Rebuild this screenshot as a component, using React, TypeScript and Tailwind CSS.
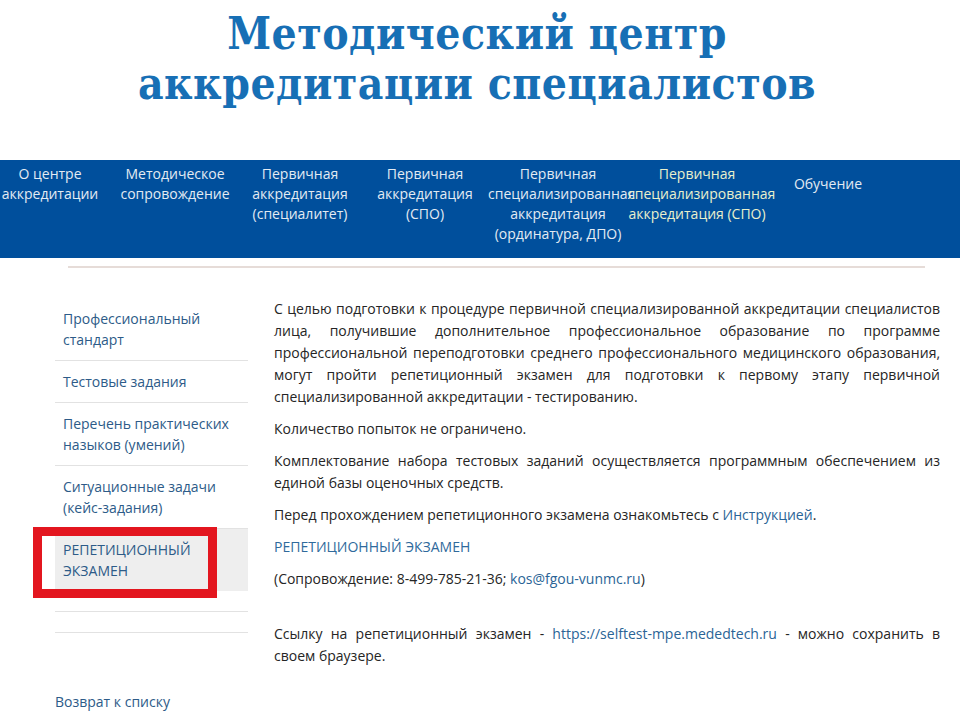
import React from "react";

const navItems: { lines: string[]; w: string; extra?: string; color?: string }[] = [
  { lines: ["О центре", "аккредитации"], w: "w-[100px]" },
  { lines: ["Методическое", "сопровождение"], w: "w-[150px]" },
  { lines: ["Первичная", "аккредитация", "(специалитет)"], w: "w-[100px]" },
  { lines: ["Первичная", "аккредитация", "(СПО)"], w: "w-[126px] ml-[12px]" },
  { lines: ["Первичная", "специализированная", "аккредитация", "(ординатура, ДПО)"], w: "w-[140px]" },
  { lines: ["Первичная", "специализированная", "аккредитация (СПО)"], w: "w-[138px]", color: "text-[#e9f0cc]" },
  { lines: ["Обучение"], w: "w-[124px]", extra: "pt-[14px]" },
];

const sideItems: string[][] = [
  ["Профессиональный", "стандарт"],
  ["Тестовые задания"],
  ["Перечень практических", "назыков (умений)"],
  ["Ситуационные задачи", "(кейс-задания)"],
];

export default function App() {
  return (
    <div className="w-[960px] h-[720px] bg-white overflow-hidden relative" style={{ fontFamily: '"Open Sans", "Noto Sans", sans-serif' }}>
      {/* Title */}
      <div className="h-[160px] pt-[9px] pr-[6px] text-center text-[#176fb5] font-bold tracking-[0.5px]" style={{ fontFamily: '"DejaVu Serif Condensed", "DejaVu Serif", serif', fontStretch: "condensed" }}>
        <div className="text-[44px] leading-[50px]">Методический центр</div>
        <div className="text-[44px] leading-[50px]">аккредитации специалистов</div>
      </div>

      {/* Nav */}
      <div className="h-[98px] bg-[#004f9c] flex text-[14px] leading-[20px] text-[#e3ebf3]">
        {navItems.map((it, i) => (
          <div key={i} className={`${it.w} ${it.extra ?? "pt-[4px]"} ${it.color ?? ""} text-center shrink-0`}>
            {it.lines.map((l, j) => (
              <div key={j} className="whitespace-nowrap">{l}</div>
            ))}
          </div>
        ))}
      </div>

      {/* Separator */}
      <div className="pt-[8px] pl-[68px] pr-[35px]">
        <div className="h-[2px] bg-[#e6dcd8]" />
      </div>

      <div className="flex pt-[30px]">
        {/* Sidebar */}
        <div className="w-[248px] pl-[55px] shrink-0 text-[14px] leading-[21px] text-[#2d5b88]">
          {sideItems.map((lines, i) => (
            <div key={i} className="px-[8px] py-[10px] border-b border-[#e2e2e2]">
              {lines.map((l, j) => (
                <div key={j}>{l}</div>
              ))}
            </div>
          ))}
          <div className="px-[8px] py-[10px] bg-[#eeeeee]">
            <div>РЕПЕТИЦИОННЫЙ</div>
            <div>ЭКЗАМЕН</div>
          </div>
          <div className="h-[21px] border-b border-[#e2e2e2]" />
          <div className="h-[21px] border-b border-[#e2e2e2]" />
          <div className="mt-[58px] -ml-[8px] px-[8px] text-[#2d5b88]">Возврат к списку</div>
        </div>

        {/* Content */}
        <div className="ml-[26px] w-[666px] text-[14px] leading-[22px] text-[#252525] text-justify">
          <p className="mb-[10px]">
            С целью подготовки к процедуре первичной специализированной аккредитации специалистов лица, получившие дополнительное профессиональное образование по программе профессиональной переподготовки среднего профессионального медицинского образования, могут пройти репетиционный экзамен для подготовки к первому этапу первичной специализированной аккредитации - тестированию.
          </p>
          <p className="mb-[10px]">Количество попыток не ограничено.</p>
          <p className="mb-[10px]">
            Комплектование набора тестовых заданий осуществляется программным обеспечением из единой базы оценочных средств.
          </p>
          <p className="mb-[10px]">
            Перед прохождением репетиционного экзамена ознакомьтесь с <span className="text-[#2a6496]">Инструкцией</span>.
          </p>
          <p className="mb-[10px] text-[#2f6a9c]">РЕПЕТИЦИОННЫЙ ЭКЗАМЕН</p>
          <p className="mb-[10px]">
            (Сопровождение: 8-499-785-21-36; <span className="text-[#2a6496]">kos@fgou-vunmc.ru</span>)
          </p>
          <div className="h-[23px]" />
          <p>
            Ссылку на репетиционный экзамен - <span className="text-[#2a6496]">https://selftest-mpe.mededtech.ru</span> - можно сохранить в своем браузере.
          </p>
        </div>
      </div>

      {/* Red highlight annotation */}
      <div className="absolute left-[33px] top-[527px] w-[184px] h-[71px] border-[9px] border-[#e3161f] pointer-events-none" />
    </div>
  );
}
